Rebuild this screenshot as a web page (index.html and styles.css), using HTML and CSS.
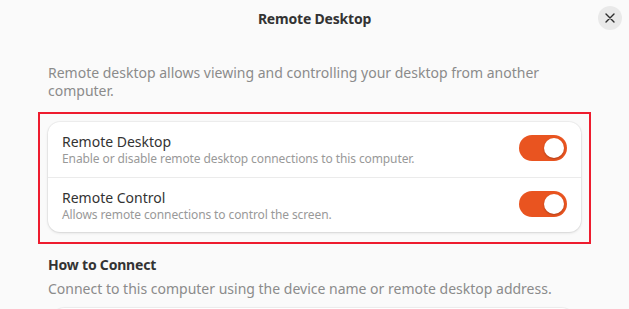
FILE: index.html
```html
<!DOCTYPE html>
<html>
<head>
<meta charset="utf-8">
<link rel="stylesheet" href="styles.css">
</head>
<body>
<div class="dialog">
  <header class="header">
    <div class="title">Remote Desktop</div>
    <button class="close" aria-label="Close">
      <svg width="10" height="10" viewBox="0 0 10 10"><path d="M1 1L9 9M9 1L1 9" stroke="#2e2e2e" stroke-width="1.4" stroke-linecap="round"/></svg>
    </button>
  </header>
  <main class="content">
    <p class="intro">Remote desktop allows viewing and controlling your desktop from another computer.</p>
    <div class="highlight">
      <div class="card">
        <div class="row">
          <div class="labels">
            <div class="row-title">Remote Desktop</div>
            <div class="row-sub">Enable or disable remote desktop connections to this computer.</div>
          </div>
          <div class="switch"><div class="knob"></div></div>
        </div>
        <div class="row">
          <div class="labels">
            <div class="row-title">Remote Control</div>
            <div class="row-sub">Allows remote connections to control the screen.</div>
          </div>
          <div class="switch"><div class="knob"></div></div>
        </div>
      </div>
    </div>
    <h2 class="section">How to Connect</h2>
    <p class="section-sub">Connect to this computer using the device name or remote desktop address.</p>
    <div class="card next"></div>
  </main>
</div>
</body>
</html>
```
FILE: styles.css
```css
* { box-sizing: border-box; }
html, body { margin: 0; padding: 0; }
body {
  width: 629px;
  height: 309px;
  overflow: hidden;
  background: #fafafa;
  font-family: "Noto Sans", "DejaVu Sans", sans-serif;
  color: #2e2e2e;
}
.dialog { display: flex; flex-direction: column; }
.header {
  height: 36px;
  display: flex;
  align-items: center;
  justify-content: center;
  position: relative;
}
.title {
  font-size: 14px;
  font-weight: 700;
  color: #333;
  letter-spacing: -0.2px;
}
.close {
  position: absolute;
  right: 7px;
  top: 6px;
  width: 24px;
  height: 24px;
  border-radius: 50%;
  border: none;
  background: #e9e9e9;
  display: flex;
  align-items: center;
  justify-content: center;
  padding: 0;
}
.content {
  padding: 28px 48px 0 48px;
}
.intro {
  margin: 0;
  font-size: 14px;
  line-height: 18px;
  color: #8b8b8b;
}
.highlight {
  margin: 12px -10px 0 -10px;
  border: 2px solid #ee1c2e;
  padding: 8px 8px 10px 8px;
}
.card {
  background: #fff;
  border-radius: 12px;
  box-shadow: 0 0 0 1px rgba(0,0,0,0.04), 0 1px 3px rgba(0,0,0,0.12);
}
.row {
  height: 55px;
  display: flex;
  align-items: center;
  padding: 0 14px;
}
.row + .row { border-top: 1px solid #ebebeb; }
.labels { flex: 1; display: flex; flex-direction: column; }
.row-title {
  font-size: 14px;
  line-height: 19px;
  color: #333;
}
.row-sub {
  font-size: 12px;
  line-height: 16px;
  color: #999;
  letter-spacing: -0.1px;
}
.switch {
  width: 48px;
  height: 26px;
  border-radius: 13px;
  background: #e95420;
  display: flex;
  align-items: center;
  justify-content: flex-end;
  padding: 3px;
  margin-top: -3px;
}
.knob {
  width: 20px;
  height: 20px;
  border-radius: 50%;
  background: #fff;
  box-shadow: 0 1px 2px rgba(0,0,0,0.25);
}
.section {
  margin: 12px 0 0 0;
  font-size: 14px;
  line-height: 18px;
  font-weight: 700;
  color: #333;
  letter-spacing: -0.2px;
}
.section-sub {
  margin: 6px 0 0 0;
  font-size: 14px;
  line-height: 18px;
  color: #8b8b8b;
}
.card.next {
  margin: 10px 7px 0 4px;
  height: 40px;
}
```
